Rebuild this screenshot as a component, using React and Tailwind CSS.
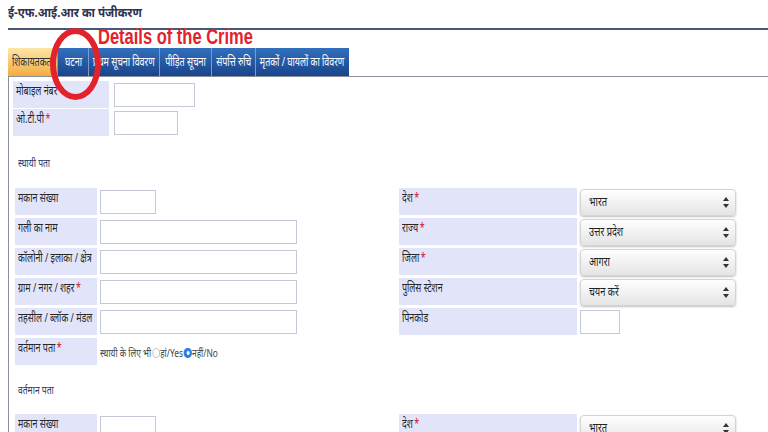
import React from "react";

const font = { fontFamily: '"Noto Sans", "Liberation Sans", sans-serif' };

function Cond({ children, className = "" }) {
  return <span className={`inline-block whitespace-nowrap origin-left scale-x-[0.74] ${className}`}>{children}</span>;
}

function Star() {
  return <span className="text-[#d0112b] ml-[2px]">*</span>;
}

function TextBox({ w }) {
  return <div className={`h-[24px] border border-[#c3c9d6] bg-white ${w}`} />;
}

function Select({ value }) {
  return (
    <div className="w-[156px] h-[27px] rounded-[4px] border border-[#d4d4d4] bg-gradient-to-b from-white to-[#e4e4e4] shadow-[0_1px_2px_rgba(0,0,0,0.25)] flex items-center justify-between pl-[8px] pr-[6px] text-[12.5px] text-[#222]">
      <Cond>{value}</Cond>
      <svg width="6" height="11" viewBox="0 0 6 11">
        <path d="M3 0 L6 4 L0 4 Z" fill="#333" />
        <path d="M0 7 L6 7 L3 11 Z" fill="#333" />
      </svg>
    </div>
  );
}

const tabs = [
  { t: "घटना", w: "w-[31px]" },
  { t: "प्रथम सूचना विवरण", w: "w-[71px]" },
  { t: "पीड़ित सूचना", w: "w-[52px]" },
  { t: "संपत्ति रुचि", w: "w-[44px]" },
  { t: "मृतकों / घायलों का विवरण", w: "w-[94px]" },
];

const labelCls = "h-[27px] bg-[#e2e4fa] px-[3px] pt-[2px] text-[12px] text-[#262626] leading-[16px] whitespace-nowrap";

function LeftRow({ label, req, box }) {
  return (
    <div className="flex h-[30px]">
      <div className={`w-[82px] ${labelCls}`}>
        <Cond>
          {label}
          {req && <Star />}
        </Cond>
      </div>
      <div className="ml-[3px] mt-[2px]">{box}</div>
    </div>
  );
}

function RightRow({ label, req, box }) {
  return (
    <div className="flex h-[30px]">
      <div className={`w-[178px] ${labelCls}`}>
        <Cond>
          {label}
          {req && <Star />}
        </Cond>
      </div>
      <div className="ml-[3px] mt-[1px]">{box}</div>
    </div>
  );
}

export default function App() {
  return (
    <div className="w-[768px] h-[432px] overflow-hidden bg-white relative" style={font}>
      <div className="h-[28px] pl-[8px] pt-[4px] text-[12.5px] font-bold text-[#2e3350]">
        <Cond className="scale-x-[0.93]">ई-एफ.आई.आर का पंजीकरण</Cond>
      </div>
      <div className="ml-[8px] h-[2px] bg-[#4b5578]" />

      <div className="mt-[18px] flex pl-[8px] h-[28px]">
        <div className="w-[49px] bg-gradient-to-b from-[#fde7a6] to-[#f4ab3c] text-[12px] text-[#333] flex items-center pl-[4px] overflow-hidden">
          <Cond>शिकायतकर्ता</Cond>
        </div>
        {tabs.map((x) => (
          <div
            key={x.t}
            className={`${x.w} bg-gradient-to-b from-[#3270bd] to-[#1a448c] text-white text-[12px] flex items-center justify-center border-l border-[#7d9bd0] whitespace-nowrap`}
          >
            <span className="inline-block scale-x-[0.74]">{x.t}</span>
          </div>
        ))}
      </div>

      <div className="ml-[8px] border-l border-t border-[#8a8f9c] h-[400px] pl-[4px] pt-[4px]">
        <div className="flex h-[28px]">
          <div className={`w-[96px] ${labelCls} h-[25px]`}><Cond>मोबाइल नंबर</Cond></div>
          <div className="ml-[5px] mt-[2px]"><TextBox w="w-[81px]" /></div>
        </div>
        <div className="flex h-[28px]">
          <div className={`w-[96px] ${labelCls} h-[25px]`}><Cond>ओ.टी.पी<Star /></Cond></div>
          <div className="ml-[5px] mt-[2px]"><TextBox w="w-[64px]" /></div>
        </div>

        <div className="pl-[5px] pt-[18px] h-[51px] text-[11.5px] text-[#2e3660] leading-[16px]">
          <Cond>स्थायी पता</Cond>
        </div>

        <div className="flex pl-[2px]">
          <div className="w-[384px]">
            <LeftRow label="मकान संख्या" box={<TextBox w="w-[56px]" />} />
            <LeftRow label="गली का नाम" box={<TextBox w="w-[197px]" />} />
            <LeftRow label="कॉलोनी / इलाका / क्षेत्र" box={<TextBox w="w-[197px]" />} />
            <LeftRow label="ग्राम / नगर / शहर" req box={<TextBox w="w-[197px]" />} />
            <LeftRow label="तहसील / ब्लॉक / मंडल" box={<TextBox w="w-[197px]" />} />
            <div className="flex h-[30px]">
              <div className={`w-[82px] ${labelCls}`}>
                <Cond>वर्तमान पता<Star /></Cond>
              </div>
              <div className="ml-[3px] mt-[7px] text-[11px] text-[#444]">
                <Cond className="scale-x-[0.76]">
                  <span className="inline-flex items-center">
                    स्थायी के लिए भी
                    <span className="inline-block w-[10px] h-[10px] rounded-full border border-[#bbb] bg-white ml-[2px]" />
                    हां/Yes
                    <span className="w-[11px] h-[10px] rounded-full bg-[#2d7fe0] ml-[1px] flex items-center justify-center">
                      <span className="w-[4px] h-[4px] rounded-full bg-white" />
                    </span>
                    नहीं/No
                  </span>
                </Cond>
              </div>
            </div>
          </div>
          <div>
            <RightRow label="देश" req box={<Select value="भारत" />} />
            <RightRow label="राज्य" req box={<Select value="उत्तर प्रदेश" />} />
            <RightRow label="जिला" req box={<Select value="आगरा" />} />
            <RightRow label="पुलिस स्टेशन" box={<Select value="चयन करें" />} />
            <RightRow label="पिनकोड" box={<div className="mt-[1px]"><TextBox w="w-[40px]" /></div>} />
          </div>
        </div>

        <div className="pl-[5px] pt-[14px] h-[46px] text-[11.5px] text-[#2e3660] leading-[16px]">
          <Cond>वर्तमान पता</Cond>
        </div>

        <div className="flex pl-[2px]">
          <div className="w-[384px]">
            <LeftRow label="मकान संख्या" box={<TextBox w="w-[56px]" />} />
          </div>
          <div>
            <RightRow label="देश" req box={<Select value="भारत" />} />
          </div>
        </div>
      </div>

      <div
        className="absolute left-[98px] top-[26px] text-[22px] font-bold text-[#e3222b] leading-none whitespace-nowrap origin-left scale-x-[0.75]"
        style={{ fontFamily: '"Liberation Sans", Arial, sans-serif' }}
      >
        Details of the Crime
      </div>
      <div className="absolute left-[50px] top-[28px] w-[51px] h-[72px] rounded-[50%] border-[6px] border-[#e3222b]" />
    </div>
  );
}
